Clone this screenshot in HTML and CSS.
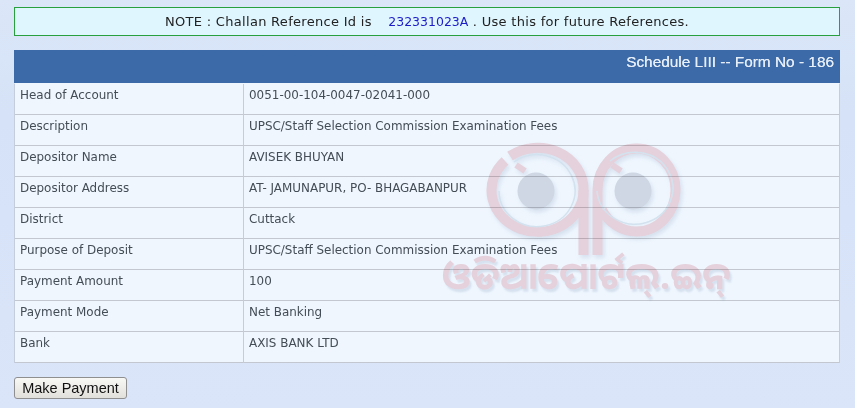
FILE: index.html
```html
<!DOCTYPE html>
<html lang="en">
<head>
<meta charset="utf-8">
<title>Challan</title>
<link rel="stylesheet" href="styles.css">
</head>
<body>
<main class="page">
  <div class="note">NOTE : Challan Reference Id is <span class="ref">232331023A</span> . Use this for future References.</div>
  <div class="sheet">
    <div class="title">Schedule LIII -- Form No - 186</div>
    <div class="grid">
      <div class="cell">Head of Account</div><div class="cell">0051-00-104-0047-02041-000</div>
      <div class="cell">Description</div><div class="cell">UPSC/Staff Selection Commission Examination Fees</div>
      <div class="cell">Depositor Name</div><div class="cell">AVISEK BHUYAN</div>
      <div class="cell">Depositor Address</div><div class="cell">AT- JAMUNAPUR, PO- BHAGABANPUR</div>
      <div class="cell">District</div><div class="cell">Cuttack</div>
      <div class="cell">Purpose of Deposit</div><div class="cell">UPSC/Staff Selection Commission Examination Fees</div>
      <div class="cell">Payment Amount</div><div class="cell">100</div>
      <div class="cell">Payment Mode</div><div class="cell">Net Banking</div>
      <div class="cell">Bank</div><div class="cell">AXIS BANK LTD</div>
    </div>
    <div class="mark">
      <svg class="mark-logo" width="210" height="120" viewBox="0 0 210 120" aria-hidden="true">
        <g fill="none" stroke="#f5d9dc" stroke-width="10">
          <path d="M30 17 A46 41.500 0 0 1 103.500 51 V116"/>
          <path d="M25 22 A46 41.500 0 1 0 103.500 51"/>
          <path d="M117.500 116 V51 A39 41.500 0 0 1 195.500 51 A39 41.500 0 0 1 156.500 92.500 A39 41.500 0 0 1 122 71"/>
        </g>
        <g fill="none" stroke="#f5d9dc" stroke-width="6">
          <path d="M36 26 L45 32"/>
          <path d="M132 26 L141 32"/>
        </g>
        <g fill="none" stroke="#e2ebf0" stroke-width="1.500">
          <path d="M34 23 A38 36 0 1 1 19 52"/>
          <path d="M130 22 A38 36 0 1 1 117 52"/>
        </g>
        <circle class="eye" cx="56" cy="52" r="18.500"/>
        <circle class="eye" cx="153" cy="52" r="18.500"/>
      </svg>
      <div class="mark-text" lang="or">ଓଡିଆପୋର୍ଟଲ୍.ଇନ୍</div>
    </div>
  </div>
  <button class="pay" type="button">Make Payment</button>
</main>
</body>
</html>
```
FILE: styles.css
```css
html, body { margin: 0; height: 100%; }
body {
  background: linear-gradient(#dbe6f8, #d5e2f7 120px, #dbe5fa);
  font-family: "DejaVu Sans", Verdana, sans-serif;
  font-size: 11.950px;
  color: #444c55;
  overflow: hidden;
}
.page { padding: 7px 15px 0 14px; }
.note {
  height: 27px;
  line-height: 27px;
  border: 1px solid #28a03e;
  background: #dff6ff;
  color: #222;
  font-size: 13px;
  text-align: center;
  letter-spacing: 0.3px;
}
.ref { color: #1c1cc8; margin-left: 12px; font-size: 12.500px; letter-spacing: 0; }
.sheet { position: relative; margin-top: 14px; }
.title {
  height: 33px;
  line-height: 24px;
  background: #3c69a8;
  color: #e6eef8;
  font-family: "Liberation Sans", Arial, sans-serif;
  font-size: 15.400px;
  text-align: right;
  padding-right: 6px;
  text-shadow: 0 0 0.5px #e6eef8;
}
.grid {
  display: grid;
  grid-template-columns: 228px 1fr;
  background: #eff6fe;
  border-top: 1px solid #eff6fe;
  border-left: 1px solid #c3cddb;
  border-right: 1px solid #c3cddb;
}
.cell {
  height: 30px;
  line-height: 22px;
  padding-left: 5px;
  border-bottom: 1px solid #c3c8d0;
}
.cell:nth-child(2n) { border-left: 1px solid #c3cddb; }
.mark {
  position: absolute;
  left: 428px;
  top: 89px;
  width: 310px;
  display: flex;
  flex-direction: column;
  align-items: flex-start;
  mix-blend-mode: multiply;
  pointer-events: none;
}
.mark-logo {
  margin-left: 38px;
  filter: drop-shadow(2px 3px 2px rgba(170, 185, 205, 0.3));
}
.eye { fill: #dcdfe4; }
.mark-text {
  margin-top: -6px;
  font-family: "Noto Sans Oriya", "Noto Sans", sans-serif;
  font-size: 37.500px;
  font-weight: 700;
  line-height: 44px;
  color: #f5d9dc;
  text-shadow: 2px 3px 2px rgba(170, 185, 205, 0.3);
  white-space: nowrap;
}
.pay {
  display: block;
  margin-top: 14px;
  width: 113px;
  height: 22px;
  padding: 0;
  border: 1px solid #8f8f8f;
  border-radius: 3px;
  background: linear-gradient(#f8f8f6, #e2e0da);
  color: #111;
  font-family: "Liberation Sans", Arial, sans-serif;
  font-size: 14.500px;
}
```
